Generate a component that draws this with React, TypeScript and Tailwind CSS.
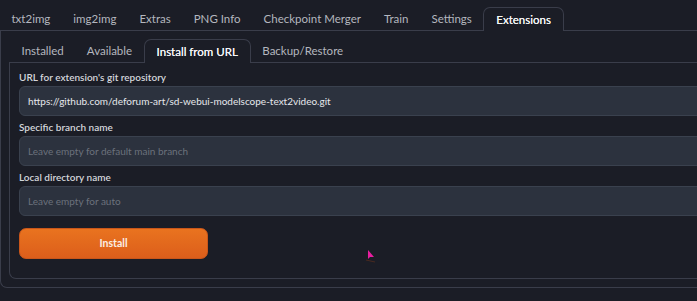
import React from "react";

const topTabs = ["txt2img", "img2img", "Extras", "PNG Info", "Checkpoint Merger", "Train", "Settings", "Extensions"];
const subTabs = ["Installed", "Available", "Install from URL", "Backup/Restore"];

function Field({ label, value, placeholder }: { label: string; value?: string; placeholder?: string }) {
  return (
    <div className="flex flex-col">
      <div className="text-[10px] font-semibold leading-[13px] text-[#d4d6db] mb-[2px]">{label}</div>
      <div className="h-[30px] rounded-[6px] border border-[#3a414e] bg-[#2c323e] flex items-center pl-[8px] text-[10px]">
        {value ? (
          <span className="text-[#e6e8ec]">{value}</span>
        ) : (
          <span className="text-[#6b717c]">{placeholder}</span>
        )}
      </div>
    </div>
  );
}

function Tab({ label, selected }: { label: string; selected: boolean }) {
  return (
    <div
      className={
        selected
          ? "h-[24px] -mb-px px-[12px] flex items-center rounded-t-[7px] border border-b-0 border-[#3a3d4a] bg-[#1b1d26] text-[11.5px] font-normal text-[#f4f5f7] [text-shadow:0_0_0.4px_#f4f5f7]"
          : "h-[23px] px-[11.5px] flex items-center text-[11.5px] text-[#b4b7bf]"
      }
    >
      {label}
    </div>
  );
}

export default function App() {
  return (
    <div
      className="w-[697px] h-[301px] overflow-hidden bg-[#1b1d26] relative"
      style={{ fontFamily: "Lato, 'Noto Sans', sans-serif" }}
    >
      <div className="w-[760px] pt-[7px]">
        {/* top tabs */}
        <div className="flex items-end border-b border-[#3a3d4a] h-[24px]">
          {topTabs.map((t) => (
            <Tab key={t} label={t} selected={t === "Extensions"} />
          ))}
        </div>
        {/* outer panel */}
        <div className="border-l border-b border-[#3a3d4a] rounded-bl-[7px] h-[257px] pt-[8px] pl-[8px]">
          <div className="flex items-end border-b border-[#3a3d4a] h-[24px] pl-[1px]">
            {subTabs.map((t) => (
              <Tab key={t} label={t} selected={t === "Install from URL"} />
            ))}
          </div>
          <div className="border-l border-b border-[#3a3d4a] rounded-bl-[7px] h-[216px] pt-[8px] pl-[9px] flex flex-col gap-[5px]">
            <Field label="URL for extension's git repository" value="https://github.com/deforum-art/sd-webui-modelscope-text2video.git" />
            <Field label="Specific branch name" placeholder="Leave empty for default main branch" />
            <Field label="Local directory name" placeholder="Leave empty for auto" />
            <div className="mt-[7px] w-[189px] h-[31px] rounded-[7px] bg-gradient-to-b from-[#e9731f] to-[#dc5e1b] border border-[#c9561a] flex items-center justify-center text-[10.5px] font-bold text-[#fbeee4]">
              Install
            </div>
          </div>
        </div>
      </div>
      {/* mouse cursor */}
      <svg className="absolute left-[366px] top-[249px]" width="12" height="14" viewBox="0 0 12 14">
        <path d="M2 1 L2 10 L4 8 L8 8 Z" fill="#e81ea0" />
        <path d="M0 11 L9 13" stroke="#4a2a20" strokeWidth="1" />
      </svg>
    </div>
  );
}
